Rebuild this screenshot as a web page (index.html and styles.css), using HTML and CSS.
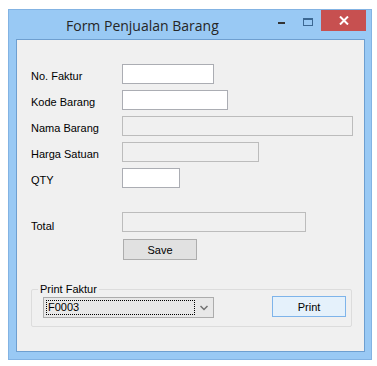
FILE: index.html
```html
<!DOCTYPE html>
<html lang="en">
<head>
  <meta charset="UTF-8">
  <title>Form Penjualan Barang</title>
  <link rel="stylesheet" href="styles.css">
</head>
<body>

  <div class="window">
    <!-- Title bar -->
    <div class="titlebar">
      <span class="title">Form Penjualan Barang</span>
      <div class="controls">
        <span class="btn-min"><span class="dash"></span></span>
        <span class="btn-max"><span class="box"></span></span>
        <span class="btn-close">
          <svg width="10" height="9" viewBox="0 0 10 9"><path d="M1 0.5 L9 8.5 M9 0.5 L1 8.5" stroke="#fff" stroke-width="2"/></svg>
        </span>
      </div>
    </div>

    <!-- Client area -->
    <div class="client">
      <div class="form-grid">
        <label class="row-label">No. Faktur</label>
        <div class="field"><input type="text" class="txt w-faktur"></div>

        <label class="row-label">Kode Barang</label>
        <div class="field"><input type="text" class="txt w-kode"></div>

        <label class="row-label">Nama Barang</label>
        <div class="field"><input type="text" class="txt w-nama" disabled></div>

        <label class="row-label">Harga Satuan</label>
        <div class="field"><input type="text" class="txt w-harga" disabled></div>

        <label class="row-label">QTY</label>
        <div class="field"><input type="text" class="txt w-qty"></div>

        <label class="row-label total-label">Total</label>
        <div class="field total-field"><input type="text" class="txt w-total" disabled></div>

        <span></span>
        <div class="field save-field"><button class="btn btn-save">Save</button></div>
      </div>

      <fieldset class="group">
        <legend>Print Faktur</legend>
        <div class="group-row">
          <div class="combo">
            <span class="combo-text">F0003</span>
            <svg class="combo-arrow" width="8" height="6" viewBox="0 0 8 6"><path d="M0.5 1 L4 4.5 L7.5 1" fill="none" stroke="#707070" stroke-width="1.5"/></svg>
          </div>
          <button class="btn btn-print">Print</button>
        </div>
      </fieldset>
    </div>
  </div>

</body>
</html>
```

FILE: styles.css
```css
* {
  box-sizing: border-box;
}

body {
  margin: 0;
  padding: 9px 0 0 8px;
  background-color: #fff;
  font-family: "Liberation Sans", Arial, sans-serif;
}

.window {
  width: 364px;
  height: 351px;
  border: 1px solid #83b3e3;
  background-color: #99c9f4;
  padding: 0 6px 7px 7px;
  display: flex;
  flex-direction: column;
}

.titlebar {
  height: 29px;
  display: flex;
  align-items: flex-start;
  justify-content: space-between;
}

.title {
  font-family: "Open Sans", "Noto Sans", sans-serif;
  font-size: 14px;
  color: #262626;
  margin: 6px 0 0 50px;
}

.controls {
  display: flex;
  margin-right: -1px;
}

.btn-min, .btn-max {
  width: 25px;
  height: 21px;
  position: relative;
}

.btn-min .dash {
  position: absolute;
  left: 9px;
  top: 12px;
  width: 7px;
  height: 2px;
  background-color: #333;
}

.btn-max .box {
  position: absolute;
  left: 9px;
  top: 8px;
  width: 10px;
  height: 8px;
  border: 1px solid #3c6893;
  border-top-width: 2px;
}

.btn-close {
  width: 45px;
  height: 21px;
  margin-left: 2px;
  background-color: #c75050;
  display: flex;
  align-items: center;
  justify-content: center;
}

.client {
  flex: 1;
  background-color: #f0f0f0;
  border: 1px solid #6e9fd0;
  padding: 24px 13px 0 14px;
}

.form-grid {
  display: grid;
  grid-template-columns: 91px 1fr;
  row-gap: 6px;
  font-size: 11px;
  color: #000;
}

.row-label {
  display: flex;
  align-items: center;
  padding-top: 3px;
  height: 20px;
}

.field {
  display: flex;
  height: 20px;
}

.txt {
  height: 20px;
  border: 1px solid #abadb3;
  background-color: #fff;
  margin: 0;
  padding: 0 2px;
}

.txt:disabled {
  background-color: #f0f0f0;
  border-color: #bcbcbc;
}

.w-faktur { width: 92px; }
.w-kode { width: 106px; }
.w-nama { width: 231px; }
.w-harga { width: 137px; }
.w-qty { width: 58px; }
.w-total { width: 184px; }

.total-label, .total-field {
  margin-top: 18px;
}

.total-label {
  padding-top: 7px;
}

.save-field {
  margin-top: 1px;
  height: 21px;
  padding-left: 1px;
}

.btn {
  height: 21px;
  width: 74px;
  font-family: "Liberation Sans", Arial, sans-serif;
  font-size: 11px;
  color: #000;
  padding: 0;
}

.btn-save {
  background-color: #e1e1e1;
  border: 1px solid #adadad;
}

.btn-print {
  background-color: #e5f1fb;
  border: 1px solid #7eb4ea;
}

.group {
  margin: 23px 0 0 0;
  width: 321px;
  border: 1px solid #dcdcdc;
  border-radius: 2px;
  padding: 0 5px 8px 11px;
  font-size: 11px;
}

.group legend {
  padding: 0 2px;
  margin-left: -5px;
  color: #000;
}

.group-row {
  display: flex;
  justify-content: space-between;
  align-items: flex-start;
  margin-top: 1px;
}

.combo {
  width: 171px;
  height: 21px;
  border: 1px solid #acacac;
  background-color: #e8e8e8;
  display: flex;
  align-items: center;
  justify-content: space-between;
  padding: 0 5px 0 2px;
  margin-top: 1px;
}

.combo-text {
  flex: 0 0 149px;
  height: 15px;
  line-height: 13px;
  border: 1px dotted #000;
  padding-left: 1px;
}
```
